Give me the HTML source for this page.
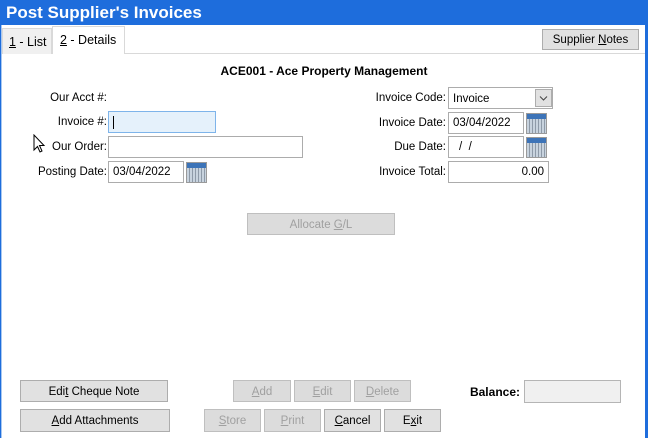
<!DOCTYPE html>
<html><head><style>
*{margin:0;padding:0;box-sizing:border-box}
body{width:648px;height:438px;background:#1e6ddc;position:relative;overflow:hidden;font-family:"Liberation Sans",Arial,sans-serif;font-size:11.5px;color:#000}
.a{position:absolute}
.title{left:6px;top:3px;color:#fff;font-weight:bold;font-size:17px}
.panel{left:1px;top:25px;width:644px;height:413px;background:#fff;border-left:1px solid #a9c8f0}
.lbl{position:absolute;text-align:right;white-space:nowrap}
.in{position:absolute;border:1px solid #acacac;background:#fff;padding:4px 4px 0;white-space:nowrap}
.btn{position:absolute;background:#e1e1e1;border:1px solid #adadad;text-align:center;white-space:nowrap;padding-top:4px}
.dis{color:#a0a0a0;background:#dcdcdc;border-color:#bfbfbf}
.cal{position:absolute;width:21px;height:21px;border:1px solid #9a9a9a;background:repeating-linear-gradient(90deg,#c8d3de 0 2px,#8e9aa8 2px 3px);}
.cal:before{content:"";position:absolute;left:0;top:0;right:0;height:5px;background:#3d74b8}
u{text-decoration:underline}
</style></head><body>
<div class="a title">Post Supplier's Invoices</div>
<div class="a panel"></div>
<div class="a" style="left:2px;top:53px;width:643px;height:1px;background:#d9d9d9"></div>
<div class="a" style="left:2px;top:28px;width:50px;height:26px;background:#f0f0f0;border:1px solid #d9d9d9;border-bottom:none;padding:6px 0 0 6px;font-size:12.5px"><u>1</u> - List</div>
<div class="a" style="left:52px;top:26px;width:73px;height:28px;background:#fff;border:1px solid #d9d9d9;border-bottom:none;padding:6px 0 0 7px;font-size:12.5px"><u>2</u> - Details</div>
<div class="btn" style="left:542px;top:29px;width:97px;height:21px">Supplier <u>N</u>otes</div>
<div class="a" style="left:0;width:648px;top:64px;text-align:center;font-weight:bold;font-size:12px">ACE001 - Ace Property Management</div>

<div class="lbl" style="right:541px;top:92px">Our Acct #:</div>
<div class="lbl" style="right:541px;top:116px">Invoice #:</div>
<div class="lbl" style="right:541px;top:141px">Our Order:</div>
<div class="lbl" style="right:541px;top:166px">Posting Date:</div>
<div class="in" style="left:108px;top:111px;width:108px;height:22px;background:#e5f1fb;border-color:#7eb4ea"><span style="display:inline-block;width:1px;height:13px;background:#000"></span></div>
<div class="in" style="left:108px;top:136px;width:195px;height:22px"></div>
<div class="in" style="left:108px;top:161px;width:76px;height:22px">03/04/2022</div>
<div class="cal" style="left:186px;top:162px"></div>

<div class="lbl" style="right:202px;top:92px">Invoice Code:</div>
<div class="lbl" style="right:202px;top:117px">Invoice Date:</div>
<div class="lbl" style="right:202px;top:141px">Due Date:</div>
<div class="lbl" style="right:202px;top:166px">Invoice Total:</div>
<div class="in" style="left:448px;top:87px;width:105px;height:22px;padding-top:5px">Invoice</div>
<div class="a" style="left:535px;top:89px;width:17px;height:18px;background:#e1e1e1;border:1px solid #adadad;text-align:center"><svg width="15" height="16" viewBox="0 0 15 16"><path d="M4 6.5 L7.5 10 L11 6.5" fill="none" stroke="#444" stroke-width="1"/></svg></div>
<div class="in" style="left:448px;top:112px;width:76px;height:22px">03/04/2022</div>
<div class="cal" style="left:526px;top:113px"></div>
<div class="in" style="left:448px;top:136px;width:76px;height:22px;padding-left:10px">/&nbsp;&nbsp;/</div>
<div class="cal" style="left:526px;top:137px"></div>
<div class="in" style="left:448px;top:161px;width:101px;height:22px;text-align:right">0.00</div>

<div class="btn dis" style="left:247px;top:213px;width:148px;height:22px;padding-top:5px">Allocate <u>G</u>/L</div>

<div class="btn" style="left:20px;top:380px;width:148px;height:22px;padding-top:5px">Edi<u>t</u> Cheque Note</div>
<div class="btn" style="left:20px;top:409px;width:150px;height:23px;padding-top:5px"><u>A</u>dd Attachments</div>
<div class="btn dis" style="left:233px;top:380px;width:58px;height:22px;padding-top:5px"><u>A</u>dd</div>
<div class="btn dis" style="left:294px;top:380px;width:57px;height:22px;padding-top:5px"><u>E</u>dit</div>
<div class="btn dis" style="left:354px;top:380px;width:57px;height:22px;padding-top:5px"><u>D</u>elete</div>
<div class="lbl" style="right:128px;top:385px;font-weight:bold;font-size:12px">Balance:</div>
<div class="a" style="left:524px;top:380px;width:97px;height:23px;background:#f0f0f0;border:1px solid #b5b5b5"></div>
<div class="btn dis" style="left:204px;top:409px;width:57px;height:23px;padding-top:5px"><u>S</u>tore</div>
<div class="btn dis" style="left:264px;top:409px;width:57px;height:23px;padding-top:5px"><u>P</u>rint</div>
<div class="btn" style="left:324px;top:409px;width:57px;height:23px;padding-top:5px"><u>C</u>ancel</div>
<div class="btn" style="left:384px;top:409px;width:57px;height:23px;padding-top:5px">E<u>x</u>it</div>

<svg class="a" style="left:33px;top:134px" width="14" height="20" viewBox="0 0 14 20"><path d="M1 1 L1 16 L4.5 12.5 L7 18 L9 17 L6.5 11.5 L11 11.5 Z" fill="#fff" stroke="#000" stroke-width="1"/></svg>
</body></html>
